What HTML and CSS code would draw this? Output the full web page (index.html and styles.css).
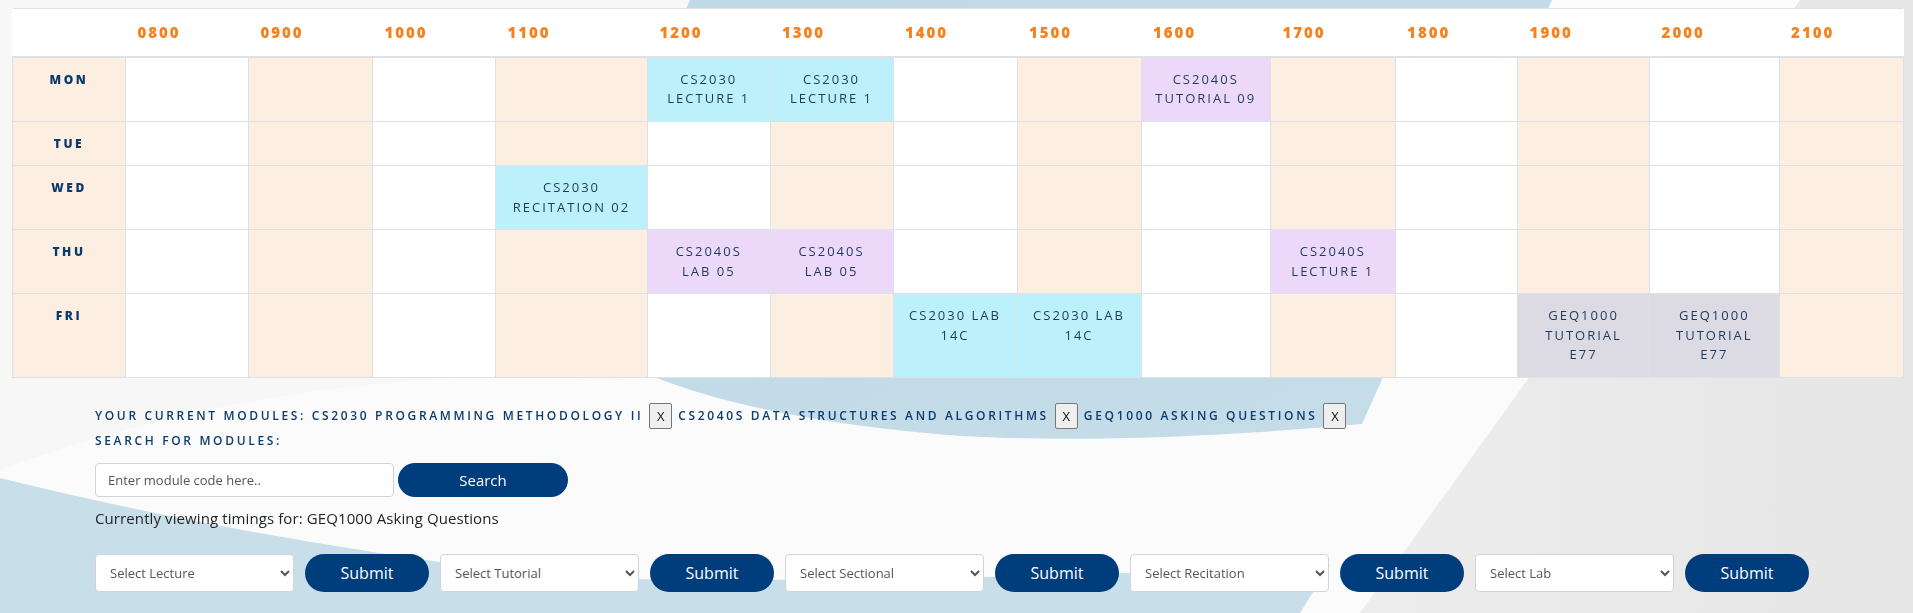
FILE: index.html
```html
<!DOCTYPE html>
<html lang="en">
<head>
<meta charset="utf-8">
<title>Timetable</title>
<link rel="stylesheet" href="styles.css">
</head>
<body>
<svg class="bg" viewBox="0 0 1913 613" preserveAspectRatio="none" aria-hidden="true">
  <defs>
    <linearGradient id="gray" x1="0" y1="0" x2="1" y2="0">
      <stop offset="0" stop-color="#f2f2f2"/>
      <stop offset="0.7" stop-color="#ededed"/>
      <stop offset="1" stop-color="#e6e6e6"/>
    </linearGradient>
    <linearGradient id="blue" x1="0" y1="0" x2="1" y2="1">
      <stop offset="0" stop-color="#bfd9e5"/>
      <stop offset="1" stop-color="#c6dde8"/>
    </linearGradient>
  </defs>
  <rect x="0" y="0" width="1913" height="613" fill="url(#gray)"/>
  <path d="M0 0 L1800 0 L1360 613 L0 613 Z" fill="#fbfbfb"/>
  <path d="M0 0 L700 0 Q560 250 620 380 Q300 360 0 470 Z" fill="#f7f7f7"/>
  <path d="M690 0 L1552 0 L1362 424 Q1130 445 960 436 Q760 420 652 376 Q600 200 690 0 Z" fill="url(#blue)"/>
  <path d="M0 478 Q250 540 560 578 Q900 585 1330 565 L1300 613 L0 613 Z" fill="#c8dfea"/>
</svg>

<div class="page">
  <table class="tt">
    <colgroup>
      <col class="w113"><col class="w123"><col class="w124"><col class="w123"><col class="w152">
      <col class="w122"><col class="w123"><col class="w124"><col class="w124"><col class="w129">
      <col class="w125"><col class="w122"><col class="w132"><col class="w129"><col class="w124">
    </colgroup>
    <thead>
      <tr>
        <th></th><th>0800</th><th>0900</th><th>1000</th><th>1100</th><th>1200</th><th>1300</th><th>1400</th>
        <th>1500</th><th>1600</th><th>1700</th><th>1800</th><th>1900</th><th>2000</th><th>2100</th>
      </tr>
    </thead>
    <tbody>
      <tr>
        <td class="day">MON</td>
        <td></td><td class="pe"></td><td></td><td class="pe"></td>
        <td class="ev cy">CS2030<br>LECTURE 1</td>
        <td class="ev cy">CS2030<br>LECTURE 1</td>
        <td></td><td class="pe"></td>
        <td class="ev pu">CS2040S<br>TUTORIAL 09</td>
        <td class="pe"></td><td></td><td class="pe"></td><td></td><td class="pe"></td>
      </tr>
      <tr>
        <td class="day">TUE</td>
        <td></td><td class="pe"></td><td></td><td class="pe"></td><td></td><td class="pe"></td><td></td>
        <td class="pe"></td><td></td><td class="pe"></td><td></td><td class="pe"></td><td></td><td class="pe"></td>
      </tr>
      <tr>
        <td class="day">WED</td>
        <td></td><td class="pe"></td><td></td>
        <td class="ev cy">CS2030<br>RECITATION 02</td>
        <td></td><td class="pe"></td><td></td>
        <td class="pe"></td><td></td><td class="pe"></td><td></td><td class="pe"></td><td></td><td class="pe"></td>
      </tr>
      <tr>
        <td class="day">THU</td>
        <td></td><td class="pe"></td><td></td><td class="pe"></td>
        <td class="ev pu">CS2040S<br>LAB 05</td>
        <td class="ev pu">CS2040S<br>LAB 05</td>
        <td></td><td class="pe"></td><td></td>
        <td class="ev pu">CS2040S<br>LECTURE 1</td>
        <td></td><td class="pe"></td><td></td><td class="pe"></td>
      </tr>
      <tr>
        <td class="day">FRI</td>
        <td></td><td class="pe"></td><td></td><td class="pe"></td><td></td><td class="pe"></td>
        <td class="ev cy">CS2030 LAB<br>14C</td>
        <td class="ev cy">CS2030 LAB<br>14C</td>
        <td></td><td class="pe"></td><td></td>
        <td class="ev gr">GEQ1000<br>TUTORIAL<br>E77</td>
        <td class="ev gr">GEQ1000<br>TUTORIAL<br>E77</td>
        <td class="pe"></td>
      </tr>
    </tbody>
  </table>

  <section class="panel">
    <div class="mods">
      <span class="txt">Your current modules: CS2030 Programming Methodology II</span>
      <button class="x" type="button">X</button>
      <span class="txt">CS2040S Data Structures and Algorithms</span>
      <button class="x" type="button">X</button>
      <span class="txt">GEQ1000 Asking Questions</span>
      <button class="x" type="button">X</button>
    </div>
    <div class="mods">
      <span class="txt">Search for modules:</span>
    </div>
    <form class="search">
      <input class="code" type="text" placeholder="Enter module code here..">
      <button class="pill wide" type="button">Search</button>
    </form>
    <p class="viewing">Currently viewing timings for: GEQ1000 Asking Questions</p>
    <div class="pickers">
      <select class="pick"><option>Select Lecture</option></select>
      <button class="pill" type="button">Submit</button>
      <select class="pick"><option>Select Tutorial</option></select>
      <button class="pill" type="button">Submit</button>
      <select class="pick"><option>Select Sectional</option></select>
      <button class="pill" type="button">Submit</button>
      <select class="pick"><option>Select Recitation</option></select>
      <button class="pill" type="button">Submit</button>
      <select class="pick"><option>Select Lab</option></select>
      <button class="pill" type="button">Submit</button>
    </div>
  </section>
</div>
</body>
</html>
```

FILE: styles.css
```css
* { box-sizing: border-box; }

html, body {
  margin: 0;
  height: 100%;
  overflow: hidden;
}

body {
  font-family: "Open Sans", "Liberation Sans", sans-serif;
  color: #212529;
}

.bg {
  position: fixed;
  left: 0;
  top: 0;
  width: 100%;
  height: 100%;
  z-index: -1;
  display: block;
}

.page {
  padding: 8px 11px 0 12px;
}

/* timetable */
.tt {
  width: 100%;
  table-layout: fixed;
  border-collapse: collapse;
  background: #fff;
}

.w113 { width: 113px; }
.w122 { width: 122.5px; }
.w123 { width: 123px; }
.w124 { width: 124px; }
.w125 { width: 124.6px; }
.w129 { width: 129.5px; }
.w132 { width: 132px; }
.w152 { width: 152px; }

.tt th,
.tt td {
  border: 1px solid #dee2e6;
  padding: 12px;
  vertical-align: top;
}

.tt thead th {
  border-left: 0;
  border-right: 0;
  border-bottom: 2px solid #dee2e6;
  text-align: left;
  color: #f5821f;
  font-size: 15px;
  font-weight: 800;
  letter-spacing: 2px;
  line-height: 22px;
  height: 48px;
  padding-top: 10px;
  padding-bottom: 10px;
  vertical-align: middle;
}

.tt tbody tr { height: 64px; }
.tt tbody tr:nth-child(2) { height: 44px; }
.tt tbody tr:nth-child(5) { height: 84px; }

.tt td {
  font-size: 13px;
  line-height: 19.5px;
  text-align: center;
  background: #fff;
}

.tt td.pe { background: #fcefe1; }

.tt td.day {
  background: #fcefe1;
  color: #0b3a6e;
  font-weight: 800;
  font-size: 12px;
  letter-spacing: 2.6px;
}

.tt td.ev {
  color: #1d3a5c;
  letter-spacing: 2px;
  white-space: nowrap;
}

.tt td.cy { background: #bcf0fa; }
.tt td.pu { background: #ecd9fa; }
.tt td.gr { background: #dcdae3; }

/* panel */
.panel {
  margin-left: 83px;
  padding-top: 25px;
}

.mods {
  display: flex;
  align-items: center;
  height: 25px;
  font-size: 12px;
  font-weight: 600;
  letter-spacing: 2.65px;
  text-transform: uppercase;
  color: #0d3b6e;
  white-space: nowrap;
}

.mods .txt { margin-right: 4px; }

.x {
  width: 23px;
  height: 26px;
  margin: 0 6px 0 2px;
  padding: 0;
  background: #efefef;
  border: 1px solid #767676;
  border-radius: 2px;
  font-family: "Open Sans", sans-serif;
  font-size: 13px;
  color: #111;
  letter-spacing: 0;
}

.search {
  display: flex;
  gap: 4px;
  margin: 10px 0 0;
}

.code {
  width: 299px;
  height: 34px;
  border: 1px solid #cfd4da;
  border-radius: 4px;
  padding: 0 12px;
  font-family: "Open Sans", sans-serif;
  font-size: 13px;
  background: #fff;
}

.code::placeholder { color: #555; }

.pill {
  width: 124px;
  height: 38px;
  border: 0;
  border-radius: 19px;
  background: #003d7c;
  color: #fff;
  font-family: "Open Sans", sans-serif;
  font-size: 16px;
  font-weight: 500;
}

.pill.wide {
  width: 170px;
  height: 34px;
  border-radius: 17px;
  font-size: 15px;
}

.viewing {
  margin: 0;
  padding-top: 10px;
  height: 57px;
  font-size: 15px;
  letter-spacing: 0.1px;
  line-height: 22px;
}

.pickers {
  display: flex;
  gap: 11px;
}

.pick {
  width: 199px;
  height: 38px;
  border: 1px solid #cfd4da;
  border-radius: 4px;
  background: #fff;
  padding: 0 10px;
  font-family: "Open Sans", sans-serif;
  font-size: 13px;
  color: #555;
}
```
